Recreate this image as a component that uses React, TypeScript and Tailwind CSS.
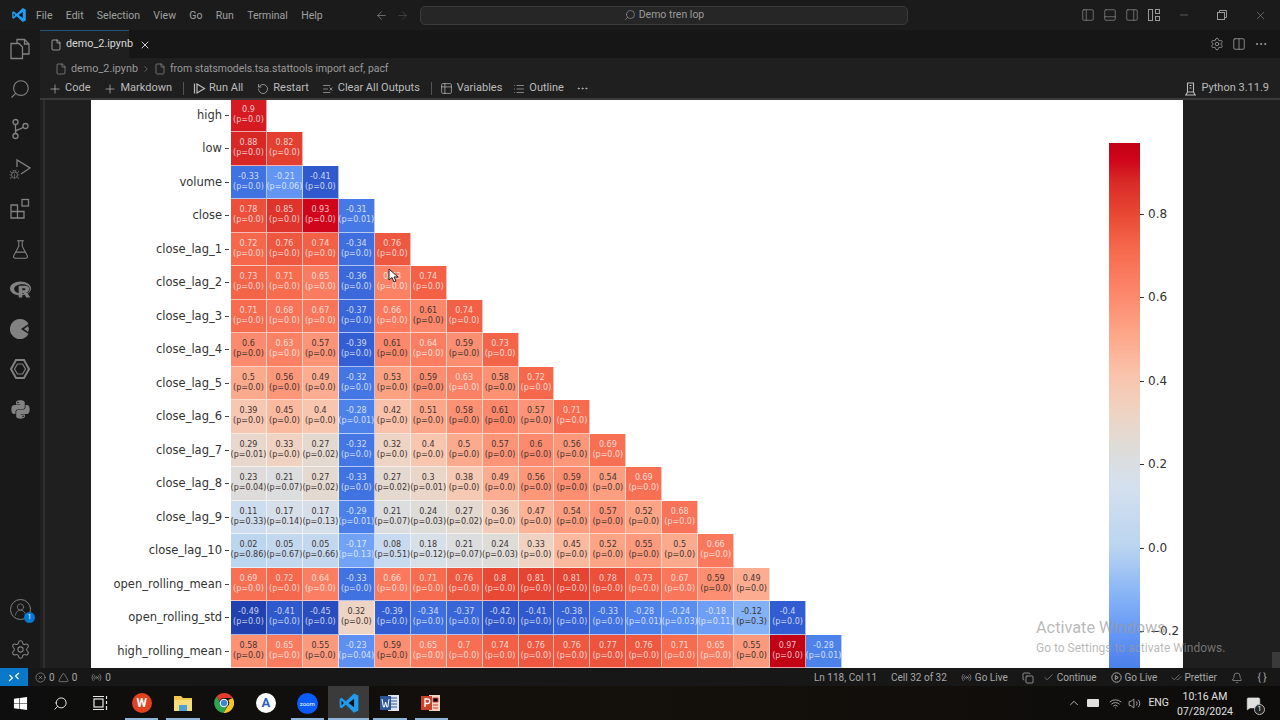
import {
  ArrowLeft, ArrowRight, Bell, Check, CheckCheck, ChevronRight, ChevronUp, CircleX, Columns2, Copy, Ellipsis, File,
  FlaskConical, List, Minus, MessageSquare, PanelBottom, PanelLeft, PanelRight, Plus, Radio, RotateCcw,
  Search, Settings, Triangle, Volume2, Wifi, X, UserRound, Bug, ListX, Table2,
} from 'lucide-react'
import { FaPython, FaRProject, FaWindows } from 'react-icons/fa'

type Cell = [number, number?]

const rows: { label: string; cells: Cell[] }[] = [
  { label: 'high', cells: [[0.9]] },
  { label: 'low', cells: [[0.88], [0.82]] },
  { label: 'volume', cells: [[-0.33], [-0.21, 0.06], [-0.41]] },
  { label: 'close', cells: [[0.78], [0.85], [0.93], [-0.31, 0.01]] },
  { label: 'close_lag_1', cells: [[0.72], [0.76], [0.74], [-0.34], [0.76]] },
  { label: 'close_lag_2', cells: [[0.73], [0.71], [0.65], [-0.36], [0.63], [0.74]] },
  { label: 'close_lag_3', cells: [[0.71], [0.68], [0.67], [-0.37], [0.66], [0.61], [0.74]] },
  { label: 'close_lag_4', cells: [[0.6], [0.63], [0.57], [-0.39], [0.61], [0.64], [0.59], [0.73]] },
  { label: 'close_lag_5', cells: [[0.5], [0.56], [0.49], [-0.32], [0.53], [0.59], [0.63], [0.58], [0.72]] },
  { label: 'close_lag_6', cells: [[0.39], [0.45], [0.4], [-0.28, 0.01], [0.42], [0.51], [0.58], [0.61], [0.57], [0.71]] },
  { label: 'close_lag_7', cells: [[0.29, 0.01], [0.33], [0.27, 0.02], [-0.32], [0.32], [0.4], [0.5], [0.57], [0.6], [0.56], [0.69]] },
  { label: 'close_lag_8', cells: [[0.23, 0.04], [0.21, 0.07], [0.27, 0.02], [-0.33], [0.27, 0.02], [0.3, 0.01], [0.38], [0.49], [0.56], [0.59], [0.54], [0.69]] },
  { label: 'close_lag_9', cells: [[0.11, 0.33], [0.17, 0.14], [0.17, 0.13], [-0.29, 0.01], [0.21, 0.07], [0.24, 0.03], [0.27, 0.02], [0.36], [0.47], [0.54], [0.57], [0.52], [0.68]] },
  { label: 'close_lag_10', cells: [[0.02, 0.86], [0.05, 0.67], [0.05, 0.66], [-0.17, 0.13], [0.08, 0.51], [0.18, 0.12], [0.21, 0.07], [0.24, 0.03], [0.33], [0.45], [0.52], [0.55], [0.5], [0.66]] },
  { label: 'open_rolling_mean', cells: [[0.69], [0.72], [0.64], [-0.33], [0.66], [0.71], [0.76], [0.8], [0.81], [0.81], [0.78], [0.73], [0.67], [0.59], [0.49]] },
  { label: 'open_rolling_std', cells: [[-0.49], [-0.41], [-0.45], [0.32], [-0.39], [-0.34], [-0.37], [-0.42], [-0.41], [-0.38], [-0.33], [-0.28, 0.01], [-0.24, 0.03], [-0.18, 0.11], [-0.12, 0.3], [-0.4]] },
  { label: 'high_rolling_mean', cells: [[0.58], [0.65], [0.55], [-0.23, 0.04], [0.59], [0.65], [0.7], [0.74], [0.76], [0.76], [0.77], [0.76], [0.71], [0.65], [0.55], [0.97], [-0.28, 0.01]] },
]

const stops: [number, number[]][] = [
  [-0.5, [32, 62, 172]],
  [-0.4, [50, 92, 210]],
  [-0.3, [72, 124, 232]],
  [-0.2, [102, 152, 246]],
  [-0.1, [140, 184, 246]],
  [0.0, [186, 212, 240]],
  [0.15, [212, 224, 238]],
  [0.24, [222, 220, 216]],
  [0.32, [238, 212, 196]],
  [0.42, [250, 194, 170]],
  [0.52, [253, 164, 134]],
  [0.62, [252, 132, 104]],
  [0.72, [246, 104, 76]],
  [0.8, [232, 72, 52]],
  [0.88, [216, 40, 38]],
  [0.93, [208, 4, 26]],
  [1.0, [184, 0, 16]],
]

function colorFor(v: number) {
  for (let i = 1; i < stops.length; i++) {
    if (v <= stops[i][0]) {
      const [a, ca] = stops[i - 1]
      const [b, cb] = stops[i]
      const t = Math.max(0, (v - a) / (b - a))
      const c = ca.map((n, k) => Math.round(n + (cb[k] - n) * t))
      return `rgb(${c[0]},${c[1]},${c[2]})`
    }
  }
  return 'rgb(184,0,16)'
}

// bar runs from 0.97 at the top to -0.3 at the bottom
const barStops = [0.97, 0.93, 0.88, 0.8, 0.72, 0.62, 0.52, 0.42, 0.32, 0.24, 0.15, 0, -0.1, -0.2, -0.3]
const barGradient = `linear-gradient(to bottom, ${barStops
  .map((v) => `${colorFor(v)} ${((0.97 - v) / 1.27) * 100}%`)
  .join(', ')})`

function HeatCell({ value, p }: { value: number; p?: number }) {
  const light = value >= 0.625 || value <= -0.17
  return (
    <div
      className={`flex h-full w-[35.94px] shrink-0 flex-col items-center justify-center whitespace-nowrap border-r border-b border-white/60 text-[8px] leading-[10px] ${light ? 'text-white/75' : 'text-[#3f3532]'}`}
      style={{ backgroundColor: colorFor(value) }}
    >
      <span>{value}</span>
      <span>(p={p ?? '0.0'})</span>
    </div>
  )
}

function Heatmap() {
  return (
    <div className="-mt-[1.5px] flex w-[760px] shrink-0 flex-col">
      {rows.map((row) => (
        <div key={row.label} className="flex h-[33.5px] shrink-0 items-center">
          <div className="flex w-[140px] shrink-0 items-center justify-end gap-[3px] pr-[2px]">
            <span className="text-[11.5px] text-[#333333]">{row.label}</span>
            <span className="h-px w-[4px] bg-[#444444]" />
          </div>
          {row.cells.map(([value, p], i) => (
            <HeatCell key={i} value={value} p={p} />
          ))}
        </div>
      ))}
    </div>
  )
}

function Colorbar() {
  const ticks = ['0.8', '0.6', '0.4', '0.2', '0.0', '−0.2']
  return (
    <div className="ml-[258px] flex pt-[43px]">
      <div className="h-[530px] w-[31px]" style={{ backgroundImage: barGradient }} />
      <div className="flex flex-col pt-[59px]">
        {ticks.map((t) => (
          <div key={t} className="flex h-[83.4px] shrink-0 items-start gap-[4px] text-[12px] leading-[24px] text-[#333333]">
            <span className="mt-[12px] h-px w-[4px] bg-[#333333]" />
            <span className={t === '−0.2' ? 'ml-[2px]' : ''}>{t}</span>
          </div>
        ))}
      </div>
    </div>
  )
}

function VsCodeLogo({ size = 16 }: { size?: number }) {
  return (
    <svg width={size} height={size} viewBox="0 0 24 24">
      <path d="M17.5 1.5 8.6 10 3.9 6.4 1.8 7.5v9l2.1 1.1L8.6 14l8.9 8.5 4.7-2.2V3.7z" fill="#1f9cf0" />
      <path d="M17.5 7.4 11.6 12l5.9 4.6z" fill="#111111" />
      <path d="M3.9 9.3 6.3 12l-2.4 2.7z" fill="#111111" />
    </svg>
  )
}

function ActivityItem({ children }: { children: React.ReactNode }) {
  return <div className="flex h-[40px] w-[40px] shrink-0 items-center justify-center text-[#828282]">{children}</div>
}

function ActivityBar() {
  return (
    <div className="flex w-[40px] shrink-0 flex-col items-center bg-[#191919]">
      <div className="-mt-[1px]" />
      <ActivityItem>
        <svg width="22" height="22" viewBox="0 0 22 22" fill="none" stroke="currentColor" strokeWidth="1.3">
          <path d="M8 5V1.5h7.5L20 6v10h-6" />
          <path d="M15.5 1.5V6H20" />
          <path d="M2 5.5h8l3.5 3.5v11.5H2z" />
        </svg>
      </ActivityItem>
      <ActivityItem><Search className="h-[22px] w-[22px] -scale-x-100" strokeWidth={1.2} /></ActivityItem>
      <ActivityItem>
        <svg width="22" height="22" viewBox="0 0 22 22" fill="none" stroke="currentColor" strokeWidth="1.3">
          <circle cx="6.5" cy="4" r="2.5" />
          <circle cx="6.5" cy="18" r="2.5" />
          <circle cx="16.5" cy="8" r="2.5" />
          <path d="M6.5 6.5v9M14 9c-1 3-7.5 2-7.5 5" />
        </svg>
      </ActivityItem>
      <ActivityItem>
        <div className="relative h-[22px] w-[22px]">
          <svg className="absolute right-0 top-0" width="20" height="20" viewBox="0 0 20 20" fill="none" stroke="currentColor" strokeWidth="1.3">
            <path d="M6 9V2l13 8-9 6" />
          </svg>
          <Bug className="absolute bottom-0 left-0 h-[11px] w-[11px]" strokeWidth={1.4} />
        </div>
      </ActivityItem>
      <ActivityItem>
        <svg width="22" height="22" viewBox="0 0 22 22" fill="none" stroke="currentColor" strokeWidth="1.3">
          <path d="M2 7h6.5v13H2zM2 13.5h13V20H8.5" />
          <rect x="13" y="1.5" width="6.5" height="6.5" />
        </svg>
      </ActivityItem>
      <ActivityItem><FlaskConical className="h-[21px] w-[21px]" strokeWidth={1.2} /></ActivityItem>
      <ActivityItem><FaRProject className="h-[21px] w-[21px]" /></ActivityItem>
      <ActivityItem>
        <svg width="20" height="20" viewBox="0 0 20 20">
          <path d="M10 0a10 10 0 1 0 8.6 15L11 10l7.6-5A10 10 0 0 0 10 0z" fill="currentColor" />
          <path d="m14 10 4-3 1 3-1 3z" fill="currentColor" />
        </svg>
      </ActivityItem>
      <ActivityItem>
        <svg width="22" height="22" viewBox="0 0 22 22" fill="none" stroke="currentColor" strokeWidth="2">
          <path d="M7 2h8l5 9-5 9H7l-5-9z" />
          <path d="M8.5 6h5l3 5-3 5h-5l-3-5z" strokeWidth="1.2" />
        </svg>
      </ActivityItem>
      <ActivityItem><FaPython className="h-[21px] w-[21px]" /></ActivityItem>
      <div className="mt-auto -mb-[1px] flex w-full flex-col items-center">
        <div className="relative flex h-[40px] w-[40px] items-center justify-center text-[#828282]">
          <div className="flex h-[21px] w-[21px] items-center justify-center rounded-full border border-[#828282]">
            <UserRound className="h-[15px] w-[15px]" strokeWidth={1.2} />
          </div>
          <span className="absolute bottom-[6px] right-[5px] flex h-[11px] w-[11px] items-center justify-center rounded-full bg-[#0078d4] text-[7px] text-white">1</span>
        </div>
        <ActivityItem><Settings className="h-[21px] w-[21px]" strokeWidth={1.2} /></ActivityItem>
      </div>
    </div>
  )
}

function TitleBar() {
  const menus = ['File', 'Edit', 'Selection', 'View', 'Go', 'Run', 'Terminal', 'Help']
  return (
    <div className="flex h-[30px] shrink-0 items-center bg-[#1b1b1b] text-[#a0a0a0]">
      <div className="flex w-[36px] justify-center pl-[1px]"><VsCodeLogo /></div>
      <div className="flex w-[339px] gap-[13.3px] pt-[1px] text-[10.5px]">
        {menus.map((m) => <span key={m}>{m}</span>)}
      </div>
      <div className="flex w-[45px] items-center gap-[8px]">
        <ArrowLeft className="h-[13px] w-[13px] text-[#8a8a8a]" strokeWidth={1.3} />
        <ArrowRight className="h-[13px] w-[13px] text-[#4a4a4a]" strokeWidth={1.3} />
      </div>
      <div className="flex h-[19px] w-[488px] items-center justify-center gap-[3px] rounded-[5px] border border-[#3b3b3b] bg-[#262626] text-[10.5px] text-[#9a9a9a]">
        <Search className="h-[12px] w-[12px] -scale-x-100" strokeWidth={1.3} />
        <span>Demo tren lop</span>
      </div>
      <div className="ml-auto flex items-center text-[#9a9a9a]">
        <div className="flex gap-[8px] pr-[17px]">
          <PanelLeft className="h-[14px] w-[14px]" strokeWidth={1.1} />
          <PanelBottom className="h-[14px] w-[14px]" strokeWidth={1.1} />
          <PanelRight className="h-[14px] w-[14px]" strokeWidth={1.1} />
          <svg width="14" height="14" viewBox="0 0 14 14" fill="none" stroke="currentColor" strokeWidth="1">
            <rect x="1.5" y="1.5" width="4" height="11" />
            <rect x="8.5" y="1.5" width="4" height="4" />
            <rect x="8.5" y="8.5" width="4" height="4" />
          </svg>
        </div>
        <Minus className="mr-[27px] h-[12px] w-[12px]" strokeWidth={1} />
        <svg className="mr-[27px]" width="10" height="10" viewBox="0 0 10 10" fill="none" stroke="currentColor" strokeWidth="1">
          <path d="M2.5 2.5V.5h7v7h-2" />
          <rect x=".5" y="2.5" width="7" height="7" />
        </svg>
        <X className="mr-[13px] h-[13px] w-[13px]" strokeWidth={1} />
      </div>
    </div>
  )
}

function TabBar() {
  return (
    <div className="flex h-[28px] shrink-0 items-center bg-[#161616]">
      <div className="flex h-full w-[89px] items-center gap-[4px] border-t border-[#24567c] bg-[#1f1f1f] pl-[10px] text-[10.8px] text-[#d8d8d8]">
        <File className="h-[12px] w-[12px] shrink-0" strokeWidth={1.3} />
        <span>demo_2.ipynb</span>
        <X className="ml-[2px] h-[12px] w-[12px] shrink-0" strokeWidth={1.9} />
      </div>
      <div className="ml-auto flex items-center gap-[8px] pr-[12px] text-[#a8a8a8]">
        <Settings className="h-[14px] w-[14px]" strokeWidth={1.3} />
        <Columns2 className="h-[14px] w-[14px]" strokeWidth={1.3} />
        <Ellipsis className="h-[14px] w-[14px]" strokeWidth={1.5} />
      </div>
    </div>
  )
}

function Breadcrumb() {
  return (
    <div className="flex h-[20px] shrink-0 items-center gap-[3px] bg-[#1f1f1f] pl-[15px] pt-[2px] text-[10.8px] text-[#9a9a9a]">
      <File className="h-[12px] w-[12px]" strokeWidth={1.3} />
      <span className="ml-[1px]">demo_2.ipynb</span>
      <ChevronRight className="h-[10px] w-[10px]" strokeWidth={1.3} />
      <File className="h-[12px] w-[12px]" strokeWidth={1.3} />
      <span className="ml-[1px] text-[10.4px]">from statsmodels.tsa.stattools import acf, pacf</span>
    </div>
  )
}

function Toolbar() {
  return (
    <div className="flex h-[22px] shrink-0 items-center border-b-2 border-[#3a3a3a] bg-[#1f1f1f] pl-[8px] pt-[1px] text-[11px] text-[#bcbcbc]">
      <Plus className="h-[14px] w-[14px]" strokeWidth={1.2} />
      <span className="ml-[3px]">Code</span>
      <Plus className="ml-[13px] h-[14px] w-[14px]" strokeWidth={1.2} />
      <span className="ml-[3px]">Markdown</span>
      <span className="ml-[11px] h-[13px] w-px bg-[#555555]" />
      <svg className="ml-[9px]" width="13" height="13" viewBox="0 0 13 13" fill="none" stroke="currentColor" strokeWidth="1.2">
        <path d="M1.5 1.5v10M4 2l7.5 4.500L4 11z" />
      </svg>
      <span className="ml-[3px]">Run All</span>
      <RotateCcw className="ml-[14px] h-[12px] w-[12px]" strokeWidth={1.4} />
      <span className="ml-[4px]">Restart</span>
      <ListX className="ml-[13px] h-[12px] w-[12px]" strokeWidth={1.3} />
      <span className="ml-[4px]">Clear All Outputs</span>
      <span className="ml-[11px] h-[13px] w-px bg-[#555555]" />
      <Table2 className="ml-[8px] h-[13px] w-[13px]" strokeWidth={1.3} />
      <span className="ml-[4px]">Variables</span>
      <List className="ml-[11px] h-[12px] w-[12px]" strokeWidth={1.3} />
      <span className="ml-[4px]">Outline</span>
      <Ellipsis className="ml-[12px] h-[13px] w-[13px]" strokeWidth={1.6} />
      <div className="ml-auto flex items-center gap-[5px] pr-[11px]">
        <svg width="13" height="14" viewBox="0 0 13 14" fill="none" stroke="currentColor" strokeWidth="1.1">
          <path d="M3.5 1h6v9h-6zM1 13h11M2 13l1.500-3M11 13l-1.500-3M5.500 3.500h2M5.500 6h2" />
        </svg>
        <span>Python 3.11.9</span>
      </div>
    </div>
  )
}

function Play2() {
  return (
    <svg width="11" height="11" viewBox="0 0 11 11" fill="none" stroke="currentColor" strokeWidth="1">
      <circle cx="5.5" cy="5.5" r="4.7" />
      <path d="M4.3 3.5v4l3-2z" />
    </svg>
  )
}

function StatusBar() {
  return (
    <div className="flex h-[18px] shrink-0 items-center bg-[#171717] text-[10px] text-[#a8a8a8]">
      <div className="flex h-full w-[28px] items-center justify-center bg-[#0a78c8] text-white">
        <svg width="12" height="12" viewBox="0 0 12 12" fill="none" stroke="currentColor" strokeWidth="1.1">
          <path d="m1 10 3.5-3L1.500 4M11 2 7.500 5l3 3" />
        </svg>
      </div>
      <div className="ml-[7px] flex items-center gap-[3px] pt-[1px]">
        <CircleX className="h-[11px] w-[11px]" strokeWidth={1.3} />
        <span>0</span>
        <Triangle className="h-[11px] w-[11px]" strokeWidth={1.3} />
        <span>0</span>
        <Radio className="ml-[11px] h-[11px] w-[11px]" strokeWidth={1.3} />
        <span>0</span>
      </div>
      <div className="ml-auto flex items-center gap-[14px] pr-[12px] pt-[1px]">
        <span>Ln 118, Col 11</span>
        <span>Cell 32 of 32</span>
        <span className="flex items-center gap-[3px]"><Radio className="h-[11px] w-[11px]" strokeWidth={1.3} />Go Live</span>
        <Copy className="-mr-[5px] h-[12px] w-[12px]" strokeWidth={1.6} />
        <span className="flex items-center gap-[3px]"><Check className="h-[11px] w-[11px]" strokeWidth={1.3} />Continue</span>
        <span className="flex items-center gap-[3px]"><Play2 />Go Live</span>
        <span className="flex items-center gap-[2px]"><CheckCheck className="h-[11px] w-[11px]" strokeWidth={1.3} />Prettier</span>
        <Bell className="h-[12px] w-[12px]" strokeWidth={1.3} />
        <span className="-ml-[1px] w-[12px] text-center">{'{ }'}</span>
      </div>
    </div>
  )
}

function TaskIcon({ children, active, open }: { children: React.ReactNode; active?: boolean; open?: boolean }) {
  return (
    <div className={`relative flex h-full w-[41.4px] items-center justify-center ${active ? 'bg-[#3b3b3b]' : ''}`}>
      {children}
      {open && <span className={`absolute bottom-0 h-[2px] bg-[#8fb5d9] ${active ? 'left-0 right-0' : 'left-[4px] right-[4px]'}`} />}
    </div>
  )
}

function Taskbar() {
  return (
    <div className="flex h-[34px] shrink-0 items-center bg-gradient-to-r from-[#0e0e0e] via-[#14100b] to-[#0d0c0b] text-white">
      <div className="flex w-[40px] justify-center"><FaWindows className="h-[15px] w-[15px]" /></div>
      <div className="flex w-[40px] justify-center"><Search className="h-[15px] w-[15px] -scale-x-100" strokeWidth={1.4} /></div>
      <div className="flex w-[41px] justify-center">
        <svg width="16" height="16" viewBox="0 0 16 16" fill="none" stroke="#e8e8e8" strokeWidth="1.2">
          <rect x="1" y="4" width="9" height="8" />
          <path d="M0 1.5h11M0 14.5h11M13.5 1v3M13.5 6v3M13.5 11v4" />
        </svg>
      </div>
      <div className="flex h-full items-center">
        <TaskIcon open>
          <div className="flex h-[20px] w-[20px] items-center justify-center rounded-full bg-[#e2431e] text-[12px] font-bold text-white">W</div>
        </TaskIcon>
        <TaskIcon open>
          <svg width="20" height="18" viewBox="0 0 20 18">
            <path d="M1 2h7l2 2h9v13H1z" fill="#f2c94c" />
            <path d="M1 6h18v11H1z" fill="#f7dc7c" />
            <path d="M6 11h8v6H6z" fill="#4aa3d8" />
          </svg>
        </TaskIcon>
        <TaskIcon>
          <svg width="20" height="20" viewBox="0 0 20 20">
            <path d="M10 0a10 10 0 0 1 8.7 5H10a5 5 0 0 0-4.6 3L2.6 3.600A10 10 0 0 1 10 0z" fill="#e33b2e" />
            <path d="M18.7 5A10 10 0 0 1 9.4 20l3.900-6.500A5 5 0 0 0 14.3 7z" fill="#f7c325" />
            <path d="M2.6 3.6 7 11a5 5 0 0 0 6 2.600L9.4 20A10 10 0 0 1 2.6 3.600z" fill="#2fa44f" />
            <circle cx="10" cy="10" r="3.8" fill="#3b82d8" stroke="#ffffff" />
          </svg>
        </TaskIcon>
        <TaskIcon>
          <div className="flex h-[20px] w-[20px] items-center justify-center rounded-full bg-white text-[13px] font-bold text-[#2a62b8]">A</div>
        </TaskIcon>
        <TaskIcon open>
          <div className="flex h-[21px] w-[21px] items-center justify-center rounded-full bg-[#0b5cff] text-[6px] text-white">zoom</div>
        </TaskIcon>
        <TaskIcon active open><VsCodeLogo size={22} /></TaskIcon>
        <TaskIcon open>
          <svg width="20" height="18" viewBox="0 0 20 18">
            <path d="M8 1h11v16H8z" fill="#dfe7f3" />
            <path d="M10 4h7M10 7h7M10 10h7M10 13h7" stroke="#2b579a" />
            <path d="M0 2h11v14H0z" fill="#2b579a" />
            <path d="m2 5 1.4 8h1l1.2-5 1.2 5h1L9 5" fill="none" stroke="#ffffff" />
          </svg>
        </TaskIcon>
        <TaskIcon open>
          <svg width="20" height="18" viewBox="0 0 20 18">
            <path d="M8 1h11v16H8z" fill="#f3d3c6" />
            <path d="M12 4h5v4h-5zM12 11h5M12 14h5" stroke="#c8442a" />
            <path d="M0 2h11v14H0z" fill="#c8442a" />
            <path d="M4 13V5h2.5a2 2 0 0 1 0 4.500H4" fill="none" stroke="#ffffff" strokeWidth="1.3" />
          </svg>
        </TaskIcon>
      </div>
      <div className="ml-auto flex items-center pr-[19px] text-[#e0e0e0]">
        <ChevronUp className="h-[14px] w-[14px]" strokeWidth={1.3} />
        <div className="ml-[6px] h-[8px] w-[12px] rounded-[1px] bg-[#e0e0e0]" />
        <Wifi className="ml-[9.5px] h-[13px] w-[13px]" strokeWidth={1.3} />
        <Volume2 className="ml-[6px] h-[13px] w-[13px]" strokeWidth={1.3} />
        <span className="ml-[7.5px] text-[10.5px]">ENG</span>
        <div className="ml-[8px] flex w-[56px] flex-col items-center pt-[1px] text-[10.5px] leading-[15px]">
          <span>10:16 AM</span>
          <span>07/28/2024</span>
        </div>
        <div className="relative ml-[13px]">
          <MessageSquare className="h-[15px] w-[15px] fill-[#e0e0e0]" strokeWidth={1} />
          <span className="absolute -bottom-[4px] -right-[4px] flex h-[11px] w-[11px] items-center justify-center rounded-full border border-[#bbbbbb] bg-[#222222] text-[7px] text-white">1</span>
        </div>
      </div>
    </div>
  )
}

export default function App() {
  return (
    <div className="relative flex h-[720px] w-[1280px] flex-col overflow-hidden bg-[#1f1f1f] font-['Roboto','Liberation_Sans',sans-serif]">
      <TitleBar />
      <div className="flex min-h-0 flex-1">
        <ActivityBar />
        <div className="flex min-w-0 flex-1 flex-col">
          <TabBar />
          <Breadcrumb />
          <Toolbar />
          <div className="flex min-h-0 flex-1 bg-[#1f1f1f]">
            <div className="ml-[3px] w-[2px] shrink-0 bg-[#2e2e2e]" />
            <div className="ml-[46px] flex w-[1092px] shrink-0 overflow-hidden bg-white font-['DejaVu_Sans',sans-serif]">
              <Heatmap />
              <Colorbar />
            </div>
            <div className="flex flex-1 flex-col justify-end">
              <div className="ml-auto h-[16px] w-[8px] bg-[#3a3a3a]" />
            </div>
          </div>
        </div>
      </div>
      <StatusBar />
      <Taskbar />

      <svg className="absolute left-[388px] top-[268px]" width="11" height="15" viewBox="0 0 11 15">
        <path d="M1 1v11l3-2.5L6 14l2-1-2-4h4z" fill="#ffffff" stroke="#222222" />
      </svg>
      <div className="pointer-events-none absolute left-[1036px] top-[618px] text-[#9a9a9a]/70">
        <div className="text-[16.3px] leading-[20px]">Activate Windows</div>
        <div className="mt-[2px] text-[12px] leading-[16px]">Go to Settings to activate Windows.</div>
      </div>
    </div>
  )
}
